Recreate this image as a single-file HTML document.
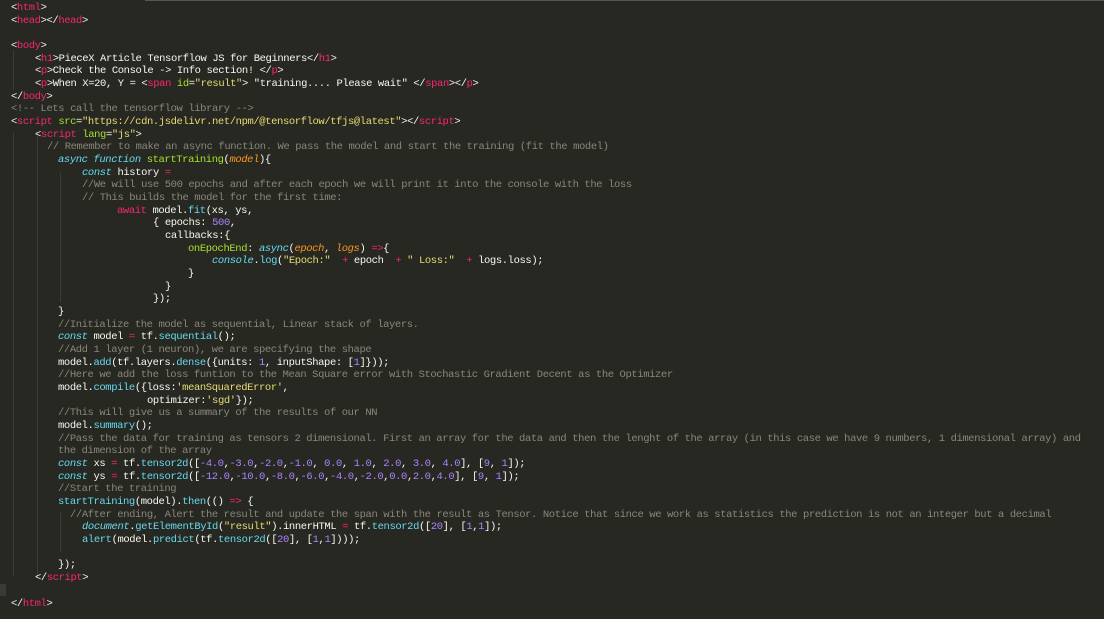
<!DOCTYPE html>
<html><head><meta charset="utf-8"><style>
body{margin:0;width:1104px;height:618px;background:#272822;overflow:hidden;position:relative;font-family:"Liberation Mono",monospace;font-size:10.5px;letter-spacing:-0.39px;color:#f8f8f2}
.w{position:absolute;left:0;top:1px;width:1104px;height:618px}
.l{position:absolute;white-space:pre;line-height:12px;height:12px}
.t{color:#f92672}.a{color:#a6e22e}.s{color:#e6db74}.c{color:#8a877b}.k{color:#66d9ef;font-style:italic}.f{color:#66d9ef}.n{color:#ae81ff}.p{color:#fd971f;font-style:italic}.o{color:#f92672}
.topbar{position:absolute;left:145px;top:0;width:959px;height:1px;background:#555}
.cur{position:absolute;left:0;top:584px;width:6px;height:12px;background:#3a3b35}
.g{position:absolute;width:1px;background:#3a3b34}
</style></head><body>
<div class="topbar"></div><div class="cur"></div>
<div class="g" style="left:13px;top:50px;height:40px"></div>
<div class="g" style="left:13px;top:133px;height:444px"></div>
<div class="g" style="left:37px;top:133px;height:444px"></div>
<div class="g" style="left:60px;top:172px;height:130px"></div>
<div class="g" style="left:60px;top:512px;height:40px"></div>
<div class="w">
<div class="l" style="top:1px;left:11px">&lt;<span class="t">html</span>&gt;</div>
<div class="l" style="top:14px;left:11px">&lt;<span class="t">head</span>&gt;&lt;/<span class="t">head</span>&gt;</div>
<div class="l" style="top:39px;left:11px">&lt;<span class="t">body</span>&gt;</div>
<div class="l" style="top:52px;left:35px">&lt;<span class="t">h1</span>&gt;PieceX Article Tensorflow JS for Beginners&lt;/<span class="t">h1</span>&gt;</div>
<div class="l" style="top:64px;left:35px">&lt;<span class="t">p</span>&gt;Check the Console -&gt; Info section! &lt;/<span class="t">p</span>&gt;</div>
<div class="l" style="top:77px;left:35px">&lt;<span class="t">p</span>&gt;When X=20, Y = &lt;<span class="t">span</span> <span class="a">id</span>=<span class="s">"result"</span>&gt; "training.... Please wait" &lt;/<span class="t">span</span>&gt;&lt;/<span class="t">p</span>&gt;</div>
<div class="l" style="top:90px;left:11px">&lt;/<span class="t">body</span>&gt;</div>
<div class="l c" style="top:102px;left:11px">&lt;!-- Lets call the tensorflow library --&gt;</div>
<div class="l" style="top:115px;left:11px">&lt;<span class="t">script</span> <span class="a">src</span>=<span class="s">"https://cdn.jsdelivr.net/npm/@tensorflow/tfjs@latest"</span>&gt;&lt;/<span class="t">script</span>&gt;</div>
<div class="l" style="top:128px;left:35px">&lt;<span class="t">script</span> <span class="a">lang</span>=<span class="s">"js"</span>&gt;</div>
<div class="l c" style="top:140px;left:47px">// Remember to make an async function. We pass the model and start the training (fit the model)</div>
<div class="l" style="top:153px;left:58px"><span class="k">async function</span> <span class="a">startTraining</span>(<span class="p">model</span>){</div>
<div class="l" style="top:166px;left:82px"><span class="k">const</span> history <span class="o">=</span></div>
<div class="l c" style="top:178px;left:82px">//We will use 500 epochs and after each epoch we will print it into the console with the loss</div>
<div class="l c" style="top:191px;left:82px">// This builds the model for the first time:</div>
<div class="l" style="top:204px;left:117px"><span class="o">await</span> model.<span class="f">fit</span>(xs, ys,</div>
<div class="l" style="top:216px;left:153px">{ epochs: <span class="n">500</span>,</div>
<div class="l" style="top:229px;left:165px">callbacks:{</div>
<div class="l" style="top:242px;left:188px"><span class="a">onEpochEnd</span>: <span class="k">async</span>(<span class="p">epoch</span>, <span class="p">logs</span>) <span class="o">=&gt;</span>{</div>
<div class="l" style="top:254px;left:212px"><span class="k">console</span>.<span class="f">log</span>(<span class="s">"Epoch:"</span>  <span class="o">+</span> epoch  <span class="o">+</span> <span class="s">" Loss:"</span>  <span class="o">+</span> logs.loss);</div>
<div class="l" style="top:267px;left:188px">}</div>
<div class="l" style="top:280px;left:165px">}</div>
<div class="l" style="top:292px;left:153px">});</div>
<div class="l" style="top:305px;left:58px">}</div>
<div class="l c" style="top:318px;left:58px">//Initialize the model as sequential, Linear stack of layers.</div>
<div class="l" style="top:330px;left:58px"><span class="k">const</span> model <span class="o">=</span> tf.<span class="f">sequential</span>();</div>
<div class="l c" style="top:343px;left:58px">//Add 1 layer (1 neuron), we are specifying the shape</div>
<div class="l" style="top:356px;left:58px">model.<span class="f">add</span>(tf.layers.<span class="f">dense</span>({units: <span class="n">1</span>, inputShape: [<span class="n">1</span>]}));</div>
<div class="l c" style="top:368px;left:58px">//Here we add the loss funtion to the Mean Square error with Stochastic Gradient Decent as the Optimizer</div>
<div class="l" style="top:381px;left:58px">model.<span class="f">compile</span>({loss:<span class="s">'meanSquaredError'</span>,</div>
<div class="l" style="top:394px;left:147px">optimizer:<span class="s">'sgd'</span>});</div>
<div class="l c" style="top:406px;left:58px">//This will give us a summary of the results of our NN</div>
<div class="l" style="top:419px;left:58px">model.<span class="f">summary</span>();</div>
<div class="l c" style="top:432px;left:58px">//Pass the data for training as tensors 2 dimensional. First an array for the data and then the lenght of the array (in this case we have 9 numbers, 1 dimensional array) and</div>
<div class="l c" style="top:444px;left:58px">the dimension of the array</div>
<div class="l" style="top:457px;left:58px"><span class="k">const</span> xs <span class="o">=</span> tf.<span class="f">tensor2d</span>([<span class="n">-4.0</span>,<span class="n">-3.0</span>,<span class="n">-2.0</span>,<span class="n">-1.0</span>, <span class="n">0.0</span>, <span class="n">1.0</span>, <span class="n">2.0</span>, <span class="n">3.0</span>, <span class="n">4.0</span>], [<span class="n">9</span>, <span class="n">1</span>]);</div>
<div class="l" style="top:470px;left:58px"><span class="k">const</span> ys <span class="o">=</span> tf.<span class="f">tensor2d</span>([<span class="n">-12.0</span>,<span class="n">-10.0</span>,<span class="n">-8.0</span>,<span class="n">-6.0</span>,<span class="n">-4.0</span>,<span class="n">-2.0</span>,<span class="n">0.0</span>,<span class="n">2.0</span>,<span class="n">4.0</span>], [<span class="n">9</span>, <span class="n">1</span>]);</div>
<div class="l c" style="top:482px;left:58px">//Start the training</div>
<div class="l" style="top:495px;left:58px"><span class="f">startTraining</span>(model).<span class="f">then</span>(() <span class="o">=&gt;</span> {</div>
<div class="l c" style="top:508px;left:70px">//After ending, Alert the result and update the span with the result as Tensor. Notice that since we work as statistics the prediction is not an integer but a decimal</div>
<div class="l" style="top:520px;left:82px"><span class="k">document</span>.<span class="f">getElementById</span>(<span class="s">"result"</span>).innerHTML <span class="o">=</span> tf.<span class="f">tensor2d</span>([<span class="n">20</span>], [<span class="n">1</span>,<span class="n">1</span>]);</div>
<div class="l" style="top:533px;left:82px"><span class="f">alert</span>(model.<span class="f">predict</span>(tf.<span class="f">tensor2d</span>([<span class="n">20</span>], [<span class="n">1</span>,<span class="n">1</span>])));</div>
<div class="l" style="top:558px;left:58px">});</div>
<div class="l" style="top:571px;left:35px">&lt;/<span class="t">script</span>&gt;</div>
<div class="l" style="top:597px;left:11px">&lt;/<span class="t">html</span>&gt;</div>
</div>
</body></html>
